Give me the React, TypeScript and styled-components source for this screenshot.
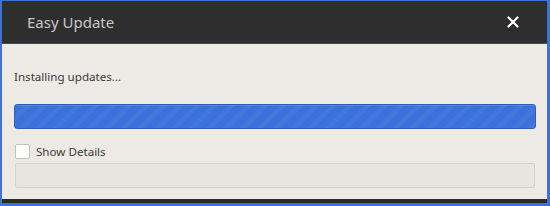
import styled, { createGlobalStyle } from 'styled-components';

const GlobalStyle = createGlobalStyle`
  html, body { margin: 0; padding: 0; background: #3f72d4; }
  * { box-sizing: border-box; }
`;

const Frame = styled.div`
  width: 550px; height: 206px; padding: 1px 3px 3px 2px; background: #3f72d4;
  font-family: "Noto Sans", "Open Sans", sans-serif;
`;
const Window = styled.div`
  display: flex; flex-direction: column; height: 100%; background: #edeae6;
  border-bottom: 4px solid #2a2a2a;
`;
const TitleBar = styled.div`
  height: 43px; flex: none; display: flex; align-items: center; justify-content: space-between;
  padding: 0 26px 0 25px; background: #2e2e2e; border-bottom: 1px solid #4a4a48;
`;
const Title = styled.span`
  color: #c9c9c9; font-size: 15px;
`;
const CloseButton = styled.button`
  display: flex; align-items: center; justify-content: center; width: 16px; height: 16px;
  padding: 0; border: none; background: transparent; cursor: pointer;
`;
const Content = styled.div`
  flex: 1; display: flex; flex-direction: column; padding: 25px 11px 0 12px;
`;
const Status = styled.div`
  height: 16px; line-height: 16px; font-size: 11.6px; color: #3a3a3a; margin-bottom: 19px;
`;
const Progress = styled.div`
  height: 25px; border: 1px solid #2f5eb4; border-radius: 3px;
  background: repeating-linear-gradient(135deg, #3b71d9 0 7px, #4477db 7px 12px);
  box-shadow: inset 0 1px 0 rgba(255, 255, 255, 0.12);
`;
const CheckRow = styled.label`
  display: flex; align-items: center; gap: 6px; margin: 15px 0 4px 1px; height: 15px;
  font-size: 11.6px; color: #3a3a3a;
`;
const CheckBox = styled.span`
  width: 15px; height: 15px; background: #fff; border: 1px solid #c4c1bc; border-radius: 2px;
`;
const Details = styled.div`
  height: 25px; margin-left: 1px; margin-right: 1px; background: #e8e5e0;
  border: 1px solid #d6d3ce; border-radius: 2px;
`;

export default function App() {
  return (
    <>
      <GlobalStyle />
      <Frame>
        <Window>
          <TitleBar>
            <Title>Easy Update</Title>
            <CloseButton aria-label="Close">
              <svg width="12" height="12" viewBox="0 0 12 12">
                <path d="M1.5 1.5 L10.5 10.5 M10.5 1.5 L1.5 10.5" stroke="#fff" strokeWidth="2.2" strokeLinecap="round" />
              </svg>
            </CloseButton>
          </TitleBar>
          <Content>
            <Status>Installing updates...</Status>
            <Progress />
            <CheckRow>
              <CheckBox />
              Show Details
            </CheckRow>
            <Details />
          </Content>
        </Window>
      </Frame>
    </>
  );
}
